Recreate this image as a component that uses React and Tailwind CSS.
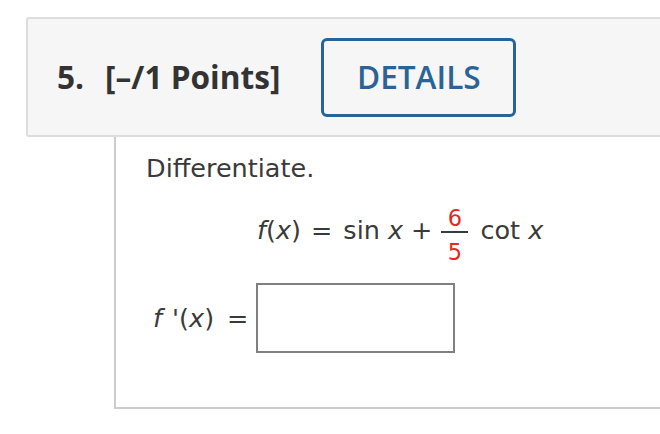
export default function App() {
  const sans = { fontFamily: '"DejaVu Sans", Verdana, sans-serif' };
  return (
    <div className="w-[660px] h-[434px] overflow-hidden bg-white">
      <div className="ml-[26px] mt-[17px] w-[680px] h-[120px] border-2 border-[#dddddd] rounded-[3px] bg-[#f6f6f6] flex items-center pl-[29px] text-[#333333]" style={{ fontFamily: '"Open Sans", sans-serif' }}>
        <span className="text-[31.6px] font-bold leading-none">5.</span>
        <span className="text-[31.6px] font-bold leading-none ml-[21px]">[–/1 Points]</span>
        <div className="ml-[41px] w-[195px] h-[79px] border-[3px] border-[#2a6496] rounded-[6px] flex items-center justify-center">
          <span className="text-[31.6px] font-semibold leading-none text-[#2a6496]">DETAILS</span>
        </div>
      </div>
      <div className="ml-[114px] w-[600px] h-[272px] border-l-2 border-b-2 border-[#cccccc] pl-[30px] pt-[16px] text-[#3a3a3a]" style={sans}>
        <div className="text-[25.5px] leading-[30px]">Differentiate.</div>
        <div className="mt-[32px] ml-[111px] flex items-start text-[25.5px] leading-[30px] whitespace-pre">
          <span><i>f</i>(<i>x</i>)</span>
          <span className="ml-[10px]">=</span>
          <span className="ml-[11px]">sin <i>x</i></span>
          <span className="ml-[8px]">+</span>
          <span className="mt-[-8px] ml-[9px] flex flex-col items-center text-[22.5px] leading-[22px] text-[#e4291f]">
            <span className="px-[6px]">6</span>
            <span className="w-[27px] h-[2px] bg-[#3a3a3a] my-[1.5px]"></span>
            <span className="mt-[7px] px-[6px]">5</span>
          </span>
          <span className="ml-[12px]">cot <i>x</i></span>
        </div>
        <div className="mt-[20px] pl-[7px] flex items-center text-[25.5px] leading-[30px] whitespace-pre">
          <span><i>f</i> <span className="ml-[2px]">'</span>(<i>x</i>)</span>
          <span className="ml-[13px]">=</span>
          <div className="ml-[8px] w-[199px] h-[70px] border-2 border-[#808080] bg-white"></div>
        </div>
      </div>
    </div>
  );
}
